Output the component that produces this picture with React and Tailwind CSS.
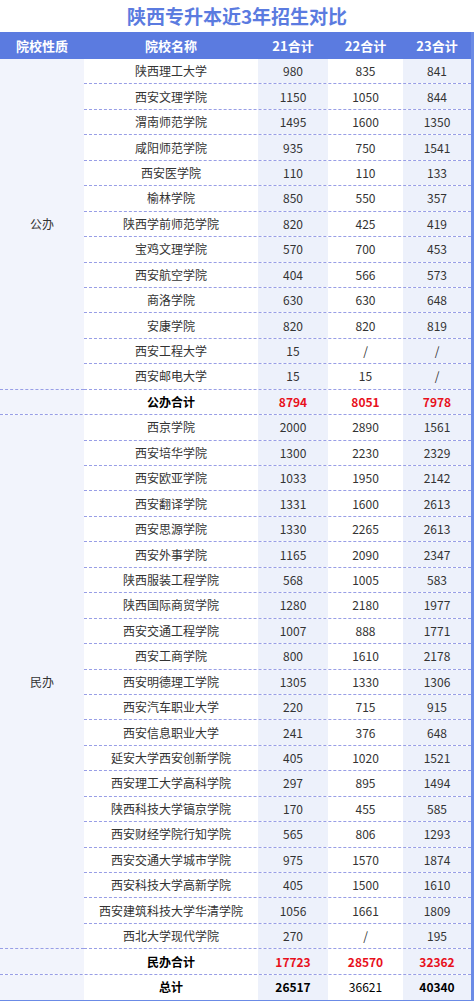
import React from "react";

const gongban = [
  ["陕西理工大学", "980", "835", "841"],
  ["西安文理学院", "1150", "1050", "844"],
  ["渭南师范学院", "1495", "1600", "1350"],
  ["咸阳师范学院", "935", "750", "1541"],
  ["西安医学院", "110", "110", "133"],
  ["榆林学院", "850", "550", "357"],
  ["陕西学前师范学院", "820", "425", "419"],
  ["宝鸡文理学院", "570", "700", "453"],
  ["西安航空学院", "404", "566", "573"],
  ["商洛学院", "630", "630", "648"],
  ["安康学院", "820", "820", "819"],
  ["西安工程大学", "15", "/", "/"],
  ["西安邮电大学", "15", "15", "/"],
];

const minban = [
  ["西京学院", "2000", "2890", "1561"],
  ["西安培华学院", "1300", "2230", "2329"],
  ["西安欧亚学院", "1033", "1950", "2142"],
  ["西安翻译学院", "1331", "1600", "2613"],
  ["西安思源学院", "1330", "2265", "2613"],
  ["西安外事学院", "1165", "2090", "2347"],
  ["陕西服装工程学院", "568", "1005", "583"],
  ["陕西国际商贸学院", "1280", "2180", "1977"],
  ["西安交通工程学院", "1007", "888", "1771"],
  ["西安工商学院", "800", "1610", "2178"],
  ["西安明德理工学院", "1305", "1330", "1306"],
  ["西安汽车职业大学", "220", "715", "915"],
  ["西安信息职业大学", "241", "376", "648"],
  ["延安大学西安创新学院", "405", "1020", "1521"],
  ["西安理工大学高科学院", "297", "895", "1494"],
  ["陕西科技大学镐京学院", "170", "455", "585"],
  ["西安财经学院行知学院", "565", "806", "1293"],
  ["西安交通大学城市学院", "975", "1570", "1874"],
  ["西安科技大学高新学院", "405", "1500", "1610"],
  ["西安建筑科技大学华清学院", "1056", "1661", "1809"],
  ["西北大学现代学院", "270", "/", "195"],
];

const dash = "border-b border-dashed border-[#989ee6]";

function DataRow({ r }) {
  return (
    <div className={`flex h-[25.45px] items-center text-[12px] text-[#333] ${dash}`}>
      <div className="w-[174px] h-full flex items-center justify-center bg-white">{r[0]}</div>
      <div className="w-[70px] h-full flex items-center justify-center bg-[#edf1fb]">{r[1]}</div>
      <div className="w-[75px] h-full flex items-center justify-center bg-white">{r[2]}</div>
      <div className="flex-1 h-full flex items-center justify-center bg-[#edf1fb]">{r[3]}</div>
    </div>
  );
}

function Group({ label, rows }) {
  return (
    <div className="flex">
      <div className={`w-[84px] flex items-center justify-center bg-[#f2f4fc] text-[12px] text-[#333] ${dash}`}>
        {label}
      </div>
      <div className="flex-1 flex flex-col">
        {rows.map((r) => (
          <DataRow key={r[0]} r={r} />
        ))}
      </div>
    </div>
  );
}

function SumRow({ label, vals, red, bold = [true, true, true], last }) {
  return (
    <div className={`flex h-[25.45px] text-[12px] font-bold ${last ? "" : dash}`}>
      <div className="w-[84px] bg-[#f2f4fc]" />
      <div className="w-[174px] flex items-center justify-center bg-white text-black">{label}</div>
      {vals.map((v, i) => (
        <div
          key={i}
          className={`${i === 0 ? "w-[70px] bg-[#edf1fb]" : i === 1 ? "w-[75px] bg-white" : "flex-1 bg-[#edf1fb]"} flex items-center justify-center ${
            red ? "text-[#e8101c]" : "text-black"
          } ${bold[i] ? "font-bold" : "font-normal text-[#333]"}`}
        >
          {v}
        </div>
      ))}
    </div>
  );
}

export default function App() {
  return (
    <div
      className="w-[474px] bg-white"
      style={{ fontFamily: '"Microsoft YaHei", "Noto Sans CJK SC", sans-serif' }}
    >
      <div className="h-[32px] flex items-center justify-center text-[19px] font-bold text-[#5b7be0]">
        陕西专升本近3年招生对比
      </div>
      <div className="border-r-[3px] border-b-[3px] border-[#6b8be6]">
        <div className="flex h-[27px] bg-[#5b7be0] text-white text-[13px] font-bold">
          <div className="w-[84px] flex items-center justify-center">院校性质</div>
          <div className="w-[174px] flex items-center justify-center">院校名称</div>
          <div className="w-[70px] flex items-center justify-center">21合计</div>
          <div className="w-[75px] flex items-center justify-center">22合计</div>
          <div className="flex-1 flex items-center justify-center">23合计</div>
        </div>
        <Group label="公办" rows={gongban} />
        <SumRow label="公办合计" vals={["8794", "8051", "7978"]} red />
        <Group label="民办" rows={minban} />
        <SumRow label="民办合计" vals={["17723", "28570", "32362"]} red />
        <SumRow label="总计" vals={["26517", "36621", "40340"]} bold={[true, false, true]} last />
      </div>
    </div>
  );
}
